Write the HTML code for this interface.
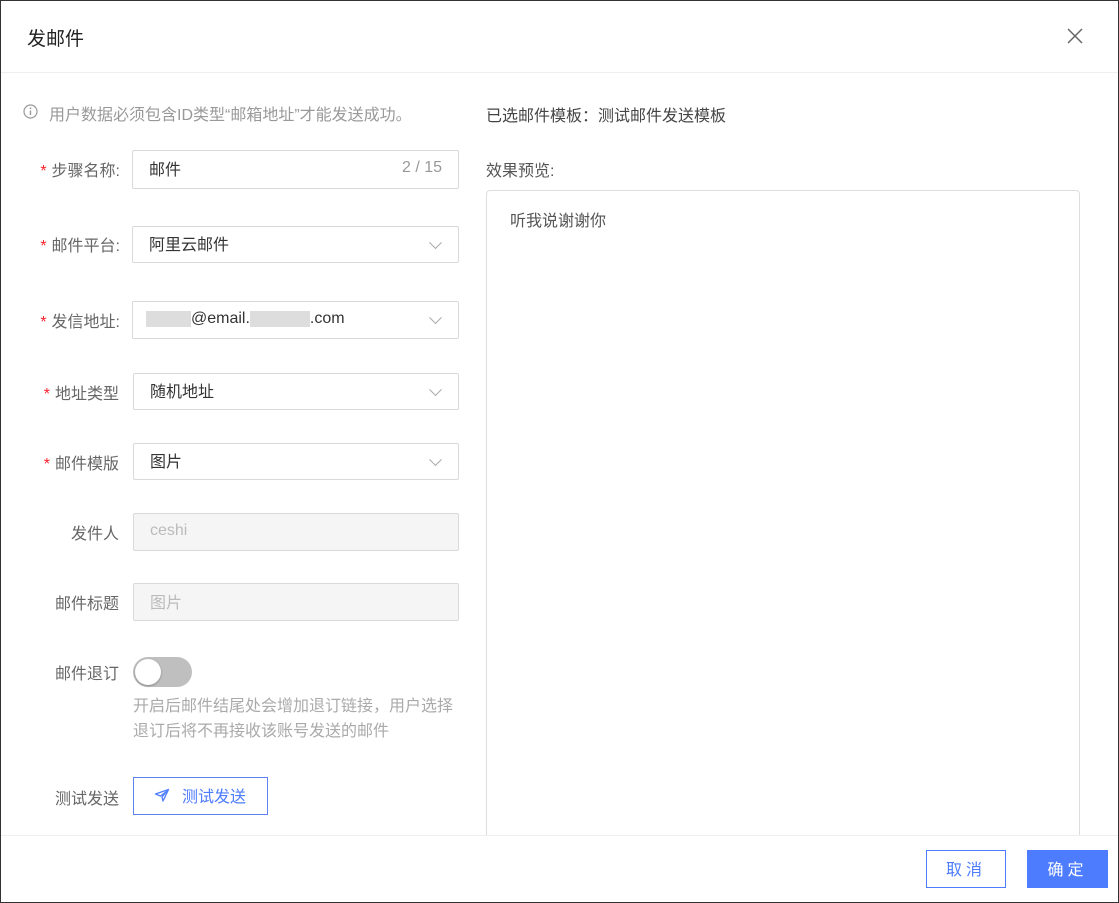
<!DOCTYPE html><html><head><meta charset="utf-8"><style>
*{box-sizing:border-box;margin:0;padding:0}
body{width:1119px;height:903px;overflow:hidden;background:#fff;font-family:"Liberation Sans","Noto Sans CJK SC",sans-serif;position:relative}
.frame{position:absolute;left:0;top:0;width:1119px;height:903px;border:1px solid #333}
.a{position:absolute;white-space:nowrap}
.inp{position:absolute;left:132px;width:327px;border:1px solid #d9d9d9;border-radius:2px;font-size:16px;color:#333;padding-left:16px;padding-bottom:3px;display:flex;align-items:center}
.dis{background:#f5f5f5;color:#bbb}
.lab{position:absolute;right:999px;font-size:16px;color:#666;text-align:right}
.req{color:#f5222d;margin-right:5px}
.chev{position:absolute;right:18px;top:50%;width:9px;height:9px;border-right:1.3px solid #aaa;border-bottom:1.3px solid #aaa;transform:translateY(-75%) rotate(45deg)}
</style></head><body>
<div class="frame"></div>
<div class="a" style="left:27px;top:24px;font-size:19px;color:#222">发邮件</div>
<svg class="a" style="left:1067px;top:28px" width="16" height="16"><path d="M1 1L15 15M15 1L1 15" stroke="#666" stroke-width="1.5"/></svg>
<div class="a" style="left:1px;top:72px;width:1117px;border-top:1px solid #eee"></div>

<svg class="a" style="left:23px;top:104px" width="15" height="15"><circle cx="7.5" cy="7.5" r="6.5" fill="none" stroke="#999" stroke-width="1.2"/><path d="M7.5 6.5v4.5" stroke="#999" stroke-width="1.4"/><circle cx="7.5" cy="4.3" r=".9" fill="#999"/></svg>
<div class="a" style="left:49px;top:101px;font-size:16px;color:#999">用户数据必须包含ID类型“邮箱地址”才能发送成功。</div>

<div class="lab" style="top:157px"><span class="req">*</span>步骤名称:</div>
<div class="inp" style="top:150px;height:39px">邮件<span style="position:absolute;right:16px;color:#999">2 / 15</span></div>
<div class="lab" style="top:232px"><span class="req">*</span>邮件平台:</div>
<div class="inp" style="top:226px;height:37px">阿里云邮件<i class="chev"></i></div>
<div class="lab" style="top:308px"><span class="req">*</span>发信地址:</div>
<div class="inp" style="top:301px;height:38px"><span style="display:inline-block;width:45px;height:16px;background:#ddd;margin-left:-3px"></span>@email.<span style="display:inline-block;width:60px;height:16px;background:#ddd"></span>.com<i class="chev"></i></div>
<div class="lab" style="top:380px;right:1000px"><span class="req">*</span>地址类型</div>
<div class="inp" style="top:373px;height:37px;left:133px;width:326px">随机地址<i class="chev"></i></div>
<div class="lab" style="top:450px;right:1000px"><span class="req">*</span>邮件模版</div>
<div class="inp" style="top:443px;height:37px;left:133px;width:326px">图片<i class="chev"></i></div>
<div class="lab" style="top:520px;right:1000px">发件人</div>
<div class="inp dis" style="top:513px;height:38px;left:133px;width:326px">ceshi</div>
<div class="lab" style="top:590px;right:1000px">邮件标题</div>
<div class="inp dis" style="top:583px;height:38px;left:133px;width:326px">图片</div>
<div class="lab" style="top:660px;right:1000px">邮件退订</div>
<div class="a" style="left:133px;top:657px;width:59px;height:30px;border-radius:15px;background:#bfbfbf"></div>
<div class="a" style="left:135px;top:659px;width:26px;height:26px;border-radius:13px;background:#fff;box-shadow:0 1px 2px rgba(0,0,0,.3)"></div>
<div class="a" style="left:133px;top:694px;font-size:16px;color:#aaa;line-height:25px">开启后邮件结尾处会增加退订链接，用户选择<br>退订后将不再接收该账号发送的邮件</div>
<div class="lab" style="top:785px;right:1000px">测试发送</div>
<div class="a" style="left:133px;top:777px;width:135px;height:38px;border:1px solid #5b84f0;color:#4d7cfe;font-size:16px;display:flex;align-items:center;padding-left:20px;padding-bottom:2px">
<svg width="16" height="14" style="margin-right:12px"><path d="M14.5 1.5L1.5 6l5 2 6-4.5-4.5 5.5 1 4z" fill="none" stroke="#4d7cfe" stroke-width="1.3" stroke-linejoin="round"/></svg>测试发送</div>

<div class="a" style="left:486px;top:102px;font-size:16px;color:#444">已选邮件模板：测试邮件发送模板</div>
<div class="a" style="left:486px;top:157px;font-size:16px;color:#555">效果预览:</div>
<div class="a" style="left:486px;top:190px;width:594px;height:700px;border:1px solid #ddd;border-radius:4px"></div>
<div class="a" style="left:510px;top:207px;font-size:16px;color:#555">听我说谢谢你</div>

<div class="a" style="left:1px;top:835px;width:1117px;height:67px;background:#fff;border-top:1px solid #eee"></div>
<div class="a" style="left:926px;top:850px;width:80px;height:38px;border:1px solid #4d7cfe;color:#4d7cfe;font-size:16px;display:flex;align-items:center;justify-content:center;letter-spacing:4px;padding-bottom:2px">取消</div>
<div class="a" style="left:1027px;top:850px;width:81px;height:38px;background:#4d7cfe;color:#fff;font-size:16px;display:flex;align-items:center;justify-content:center;letter-spacing:4px;padding-bottom:2px">确定</div>
</body></html>
